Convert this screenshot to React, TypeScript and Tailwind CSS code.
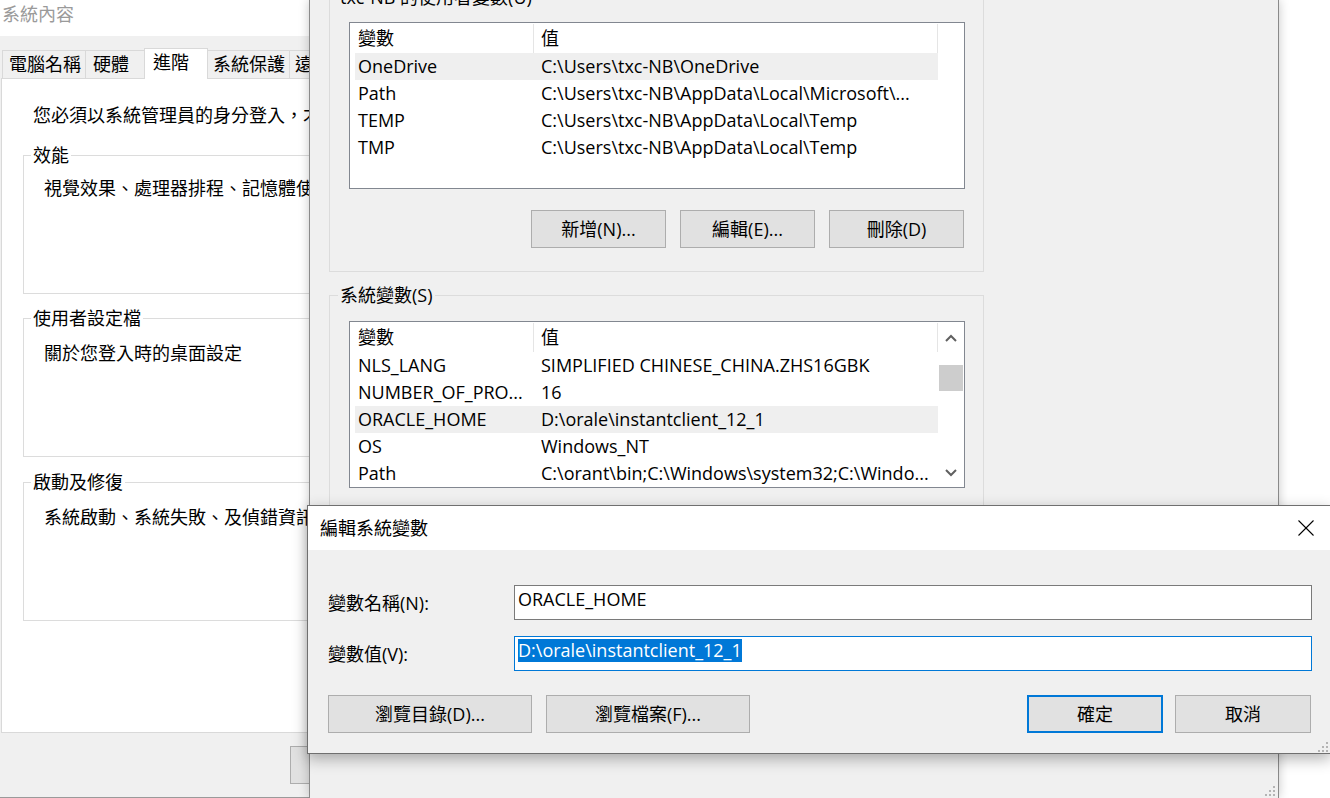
import React from "react";

type Row = [string, string];

function Chevron({ up }: { up?: boolean }) {
  return (
    <svg width="12" height="8" viewBox="0 0 12 8">
      <polyline
        points={up ? "1,7 6,2 11,7" : "1,1 6,6 11,1"}
        fill="none"
        stroke="#606060"
        strokeWidth="2"
      />
    </svg>
  );
}

function Grip() {
  return (
    <svg width="12" height="12" viewBox="0 0 12 12">
      <rect x="9" y="1" width="2" height="2" fill="#b4b4b4" />
      <rect x="5" y="5" width="2" height="2" fill="#b4b4b4" />
      <rect x="9" y="5" width="2" height="2" fill="#b4b4b4" />
      <rect x="1" y="9" width="2" height="2" fill="#b4b4b4" />
      <rect x="5" y="9" width="2" height="2" fill="#b4b4b4" />
      <rect x="9" y="9" width="2" height="2" fill="#b4b4b4" />
    </svg>
  );
}

function ListBox({ rows, sel, scroll }: { rows: Row[]; sel: number; scroll?: boolean }) {
  return (
    <div className="w-[616px] h-[167px] border border-[#828790] bg-white flex overflow-hidden">
      <div className="w-[588px] flex flex-col shrink-0">
        <div className="h-[30px] flex shrink-0">
          <div className="w-[183px] pl-[8px] leading-[30px]">變數</div>
          <div className="w-px bg-[#e5e5e5] h-[29px] mt-[1px]" />
          <div className="w-[403px] pl-[7px] leading-[30px]">值</div>
          <div className="w-px bg-[#e5e5e5] h-[29px] mt-[1px]" />
        </div>
        {rows.map((r, i) => (
          <div
            key={i}
            className={
              "ml-[5px] w-[583px] h-[27px] flex shrink-0 leading-[27px] " +
              (i === sel ? "bg-[#efefef]" : "")
            }
          >
            <div className="w-[186px] pl-[3px] whitespace-nowrap overflow-hidden">{r[0]}</div>
            <div className="flex-1 whitespace-nowrap overflow-hidden">{r[1]}</div>
          </div>
        ))}
      </div>
      {scroll && (
        <div className="w-[26px] flex flex-col items-center">
          <div className="h-[32px] w-full flex items-center justify-center">
            <Chevron up />
          </div>
          <div className="mt-[11px] h-[26px] w-[24px] bg-[#cdcdcd]" />
          <div className="flex-1" />
          <div className="h-[29px] w-full flex items-center justify-center">
            <Chevron />
          </div>
        </div>
      )}
    </div>
  );
}

function Btn({ label, w, extra }: { label: string; w: string; extra?: string }) {
  return (
    <div
      className={
        "h-[38px] flex items-center justify-center bg-[#e1e1e1] border border-[#adadad] " +
        w +
        " " +
        (extra ?? "")
      }
    >
      {label}
    </div>
  );
}

export default function App() {
  const userRows: Row[] = [
    ["OneDrive", "C:\\Users\\txc-NB\\OneDrive"],
    ["Path", "C:\\Users\\txc-NB\\AppData\\Local\\Microsoft\\..."],
    ["TEMP", "C:\\Users\\txc-NB\\AppData\\Local\\Temp"],
    ["TMP", "C:\\Users\\txc-NB\\AppData\\Local\\Temp"],
  ];
  const sysRows: Row[] = [
    ["NLS_LANG", "SIMPLIFIED CHINESE_CHINA.ZHS16GBK"],
    ["NUMBER_OF_PRO...", "16"],
    ["ORACLE_HOME", "D:\\orale\\instantclient_12_1"],
    ["OS", "Windows_NT"],
    ["Path", "C:\\orant\\bin;C:\\Windows\\system32;C:\\Windo..."],
  ];

  return (
    <div className="relative w-[1330px] h-[798px] overflow-hidden bg-white text-black text-[18px] font-['Open_Sans','Noto_Sans_CJK_TC',sans-serif]">
      {/* Window 1: 系統內容 */}
      <div className="absolute left-0 top-0 w-[700px] h-[798px] bg-[#f0f0f0] border-b border-[#9a9a9a] flex flex-col">
        <div className="h-[36px] shrink-0 bg-white pl-[2px] text-[#9a9a9a] leading-[28px]">系統內容</div>
        <div className="h-[42px] shrink-0 flex items-end pl-[2px]">
          <div className="w-[84px] h-[28px] border border-b-0 border-[#d9d9d9] pl-[6px] leading-[26px]">電腦名稱</div>
          <div className="w-[60px] h-[28px] -ml-px border border-b-0 border-[#d9d9d9] pl-[7px] leading-[26px]">硬體</div>
          <div className="relative z-10 w-[64px] h-[31px] -ml-px -mb-px bg-white border border-b-0 border-[#d9d9d9] pl-[8px] leading-[26px]">進階</div>
          <div className="w-[83px] h-[28px] -ml-px border border-b-0 border-[#d9d9d9] pl-[5px] leading-[26px]">系統保護</div>
          <div className="w-[80px] h-[28px] -ml-px border border-b-0 border-[#d9d9d9] pl-[5px] leading-[26px]">遠端</div>
        </div>
        <div className="ml-[1px] h-[655px] shrink-0 bg-white border border-[#d9d9d9] pl-[21px] pt-[24px] flex flex-col">
          <div className="ml-[10px] leading-[24px] whitespace-nowrap">您必須以系統管理員的身分登入，才能進行這些變更。</div>
          <fieldset className="mt-[16px] w-[900px] h-[151px] border border-[#dcdcdc]">
            <legend className="ml-[7px] px-[2px] leading-[24px]">效能</legend>
            <div className="mt-[9px] ml-[20px] leading-[24px] whitespace-nowrap">視覺效果、處理器排程、記憶體使用量及虛擬記憶體</div>
          </fieldset>
          <fieldset className="mt-[12px] w-[900px] h-[151px] border border-[#dcdcdc]">
            <legend className="ml-[7px] px-[2px] leading-[24px]">使用者設定檔</legend>
            <div className="mt-[11px] ml-[20px] leading-[24px] whitespace-nowrap">關於您登入時的桌面設定</div>
          </fieldset>
          <fieldset className="mt-[13px] w-[900px] h-[151px] border border-[#dcdcdc]">
            <legend className="ml-[7px] px-[2px] leading-[24px]">啟動及修復</legend>
            <div className="mt-[11px] ml-[20px] leading-[24px] whitespace-nowrap">系統啟動、系統失敗、及偵錯資訊</div>
          </fieldset>
        </div>
        <div className="pl-[290px] pt-[13px]">
          <Btn label="確定" w="w-[135px]" />
        </div>
      </div>

      {/* Window 2: 環境變數 */}
      <div className="absolute left-[309px] top-0 z-10 w-[970px] h-[798px] bg-[#f0f0f0] border-l border-r border-[#8a8a8a] shadow-[0_0_10px_rgba(0,0,0,0.22)] overflow-hidden">
        <div className="-mt-[15px] pl-[19px] flex flex-col">
          <fieldset className="w-[655px] h-[287px] border border-[#dcdcdc]">
            <legend className="ml-[8px] px-[2px] leading-[24px]">txc-NB 的使用者變數(U)</legend>
            <div className="ml-[19px] mt-[13px]">
              <ListBox rows={userRows} sel={0} />
            </div>
            <div className="mt-[21px] ml-[201px] flex gap-[14px]">
              <Btn label="新增(N)..." w="w-[135px]" />
              <Btn label="編輯(E)..." w="w-[135px]" />
              <Btn label="刪除(D)" w="w-[135px]" />
            </div>
          </fieldset>
          <fieldset className="mt-[11px] w-[655px] h-[400px] border border-[#dcdcdc]">
            <legend className="ml-[8px] px-[2px] leading-[24px]">系統變數(S)</legend>
            <div className="ml-[19px] mt-[14px]">
              <ListBox rows={sysRows} sel={2} scroll />
            </div>
          </fieldset>
        </div>
        <div className="absolute right-[2px] bottom-[1px]">
          <Grip />
        </div>
      </div>

      {/* Window 3: 編輯系統變數 */}
      <div className="absolute left-[307px] top-[505px] z-20 w-[1024px] h-[249px] bg-[#f0f0f0] border border-[#6f6f6f] shadow-[0_5px_14px_rgba(0,0,0,0.3)] flex flex-col">
        <div className="h-[44px] shrink-0 bg-white flex items-center justify-between">
          <div className="pl-[12px] leading-[24px]">編輯系統變數</div>
          <div className="w-[46px] h-[44px] flex items-center justify-center mr-[1px]">
            <svg width="16" height="16" viewBox="0 0 16 16">
              <line x1="0.5" y1="0.5" x2="15.5" y2="15.5" stroke="#000" strokeWidth="1.1" />
              <line x1="15.5" y1="0.5" x2="0.5" y2="15.5" stroke="#000" strokeWidth="1.1" />
            </svg>
          </div>
        </div>
        <div className="relative flex-1 pl-[20px] pt-[35px] flex flex-col">
          <div className="flex items-center h-[35px]">
            <div className="w-[186px] leading-[24px]">變數名稱(N):</div>
            <div className="w-[798px] h-[35px] bg-white border border-[#7a7a7a] pl-[3px] leading-[27px]">ORACLE_HOME</div>
          </div>
          <div className="mt-[16px] flex items-center h-[35px]">
            <div className="w-[186px] leading-[24px]">變數值(V):</div>
            <div className="w-[798px] h-[35px] bg-white border border-[#0078d7] pl-[3px] pt-[2px]">
              <span className="inline-block align-top bg-[#0078d7] text-white h-[23px] leading-[23px]">D:\orale\instantclient_12_1</span>
            </div>
          </div>
          <div className="mt-[24px] flex">
            <Btn label="瀏覽目錄(D)..." w="w-[204px]" />
            <Btn label="瀏覽檔案(F)..." w="w-[204px]" extra="ml-[14px]" />
            <div className="ml-[277px] w-[136px] h-[38px] flex items-center justify-center bg-[#e1e1e1] border-2 border-[#0078d7]">確定</div>
            <Btn label="取消" w="w-[136px]" extra="ml-[12px]" />
          </div>
          <div className="absolute right-[1px] bottom-[0px]">
            <Grip />
          </div>
        </div>
      </div>
    </div>
  );
}
